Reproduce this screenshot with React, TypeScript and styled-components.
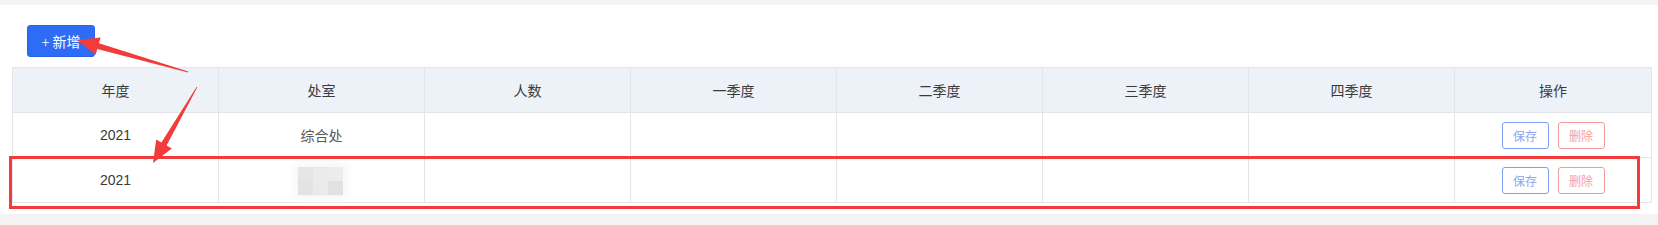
import styled, { createGlobalStyle } from "styled-components"

const GlobalStyle = createGlobalStyle`
    html, body {
        margin: 0;
        padding: 0;
        background: #f3f3f3;
        font-family: "Liberation Sans", "Noto Sans CJK SC", sans-serif;
    }
`

const colors = {
    primary: "#2f6cf5",
    border: "#e3e5ea",
    headBg: "#edf1f8",
    text: "#3a3a3a",
    save: "#7d9ff0",
    saveText: "#8aa5ee",
    del: "#f29b9b",
    delText: "#f3a2a2",
    mark: "#f23b3b",
}

const Page = styled.div`
    position: relative;
    width: 1658px;
    height: 225px;
    padding-top: 5px;
    box-sizing: border-box;
`

const Panel = styled.div`
    background: #fff;
    padding: 20px 6px 11px 12px;
`

const Toolbar = styled.div`
    display: flex;
    padding-left: 15px;
    margin-bottom: 10px;
`

const AddButton = styled.button`
    width: 68px;
    height: 32px;
    border: 1px solid #2a62e6;
    border-radius: 3px;
    background: ${colors.primary};
    color: #fff;
    font-size: 14px;
    font-family: "Noto Sans CJK SC", sans-serif;
    padding: 0;
    display: flex;
    align-items: center;
    justify-content: center;
    gap: 3px;

    span:first-child {
        font-weight: 300;
        font-size: 15px;
    }
`

const Table = styled.div`
    display: grid;
    grid-template-columns: repeat(7, 206px) 197px;
    border-left: 1px solid ${colors.border};
    border-top: 1px solid ${colors.border};
    width: 1640px;
    box-sizing: border-box;
`

const Cell = styled.div<{ $head?: boolean; $muted?: boolean }>`
    height: 45px;
    box-sizing: border-box;
    border-right: 1px solid ${colors.border};
    border-bottom: 1px solid ${colors.border};
    background: ${(p) => (p.$head ? colors.headBg : "#fff")};
    display: flex;
    align-items: center;
    justify-content: center;
    gap: 9px;
    font-size: 14px;
    color: ${(p) => (p.$muted ? "#595959" : colors.text)};
    font-family: "Liberation Sans", "Noto Sans CJK SC", sans-serif;
`

const SmallButton = styled.button<{ $kind: "save" | "del" }>`
    width: 47px;
    height: 27px;
    padding: 0;
    border-radius: 3px;
    background: #fff;
    border: 1px solid ${(p) => (p.$kind === "save" ? colors.save : colors.del)};
    color: ${(p) => (p.$kind === "save" ? colors.saveText : colors.delText)};
    font-size: 12px;
    font-family: "Noto Sans CJK SC", sans-serif;
`

const Mosaic = styled.div`
    display: grid;
    grid-template-columns: repeat(3, 15px);
    grid-template-rows: repeat(2, 14px);
    box-shadow: 0 0 8px 4px #f7f7f7;
    margin-right: 2px;
    margin-top: 2px;

    span:nth-child(1) { background: #e6e6e6; }
    span:nth-child(2) { background: #ebebeb; }
    span:nth-child(3) { background: #ececec; }
    span:nth-child(4) { background: #e3e3e3; }
    span:nth-child(5) { background: #eaeaea; }
    span:nth-child(6) { background: #e1e1e1; }
`

const Highlight = styled.div`
    position: absolute;
    left: 9px;
    top: 156px;
    width: 1631px;
    height: 53px;
    box-sizing: border-box;
    border: 3px solid ${colors.mark};
    pointer-events: none;
`

const Overlay = styled.svg`
    position: absolute;
    left: 0;
    top: 0;
    pointer-events: none;
`

const headers = ["年度", "处室", "人数", "一季度", "二季度", "三季度", "四季度", "操作"]

const arrow = (x1: number, y1: number, x2: number, y2: number, headLen: number, headW: number, neck: number) => {
    const dx = x2 - x1
    const dy = y2 - y1
    const len = Math.hypot(dx, dy)
    const ux = dx / len
    const uy = dy / len
    const nx = -uy
    const ny = ux
    const bx = x2 - ux * headLen
    const by = y2 - uy * headLen
    const pts = [
        [x1 + nx * 0.4, y1 + ny * 0.4],
        [bx + nx * neck, by + ny * neck],
        [bx + nx * headW, by + ny * headW],
        [x2, y2],
        [bx - nx * headW, by - ny * headW],
        [bx - nx * neck, by - ny * neck],
        [x1 - nx * 0.4, y1 - ny * 0.4],
    ]
    return pts.map((p) => p.map((v) => v.toFixed(1)).join(",")).join(" ")
}

const Actions = () => (
    <>
        <SmallButton $kind="save">保存</SmallButton>
        <SmallButton $kind="del">删除</SmallButton>
    </>
)

const App = () => {
    return (
        <Page>
            <GlobalStyle />
            <Panel>
                <Toolbar>
                    <AddButton>
                        <span>+</span>
                        <span>新增</span>
                    </AddButton>
                </Toolbar>
                <Table>
                    {headers.map((h) => (
                        <Cell key={h} $head>{h}</Cell>
                    ))}

                    <Cell>2021</Cell>
                    <Cell $muted>综合处</Cell>
                    <Cell />
                    <Cell />
                    <Cell />
                    <Cell />
                    <Cell />
                    <Cell><Actions /></Cell>

                    <Cell>2021</Cell>
                    <Cell>
                        <Mosaic>
                            <span /><span /><span /><span /><span /><span />
                        </Mosaic>
                    </Cell>
                    <Cell />
                    <Cell />
                    <Cell />
                    <Cell />
                    <Cell />
                    <Cell><Actions /></Cell>
                </Table>
            </Panel>

            <Highlight />
            <Overlay width="1658" height="225">
                <polygon points={arrow(188, 72, 77, 40, 22, 9, 3)} fill={colors.mark} />
                <polygon points={arrow(197, 87, 153, 163, 22, 9, 3)} fill={colors.mark} />
            </Overlay>
        </Page>
    )
}

export default App
